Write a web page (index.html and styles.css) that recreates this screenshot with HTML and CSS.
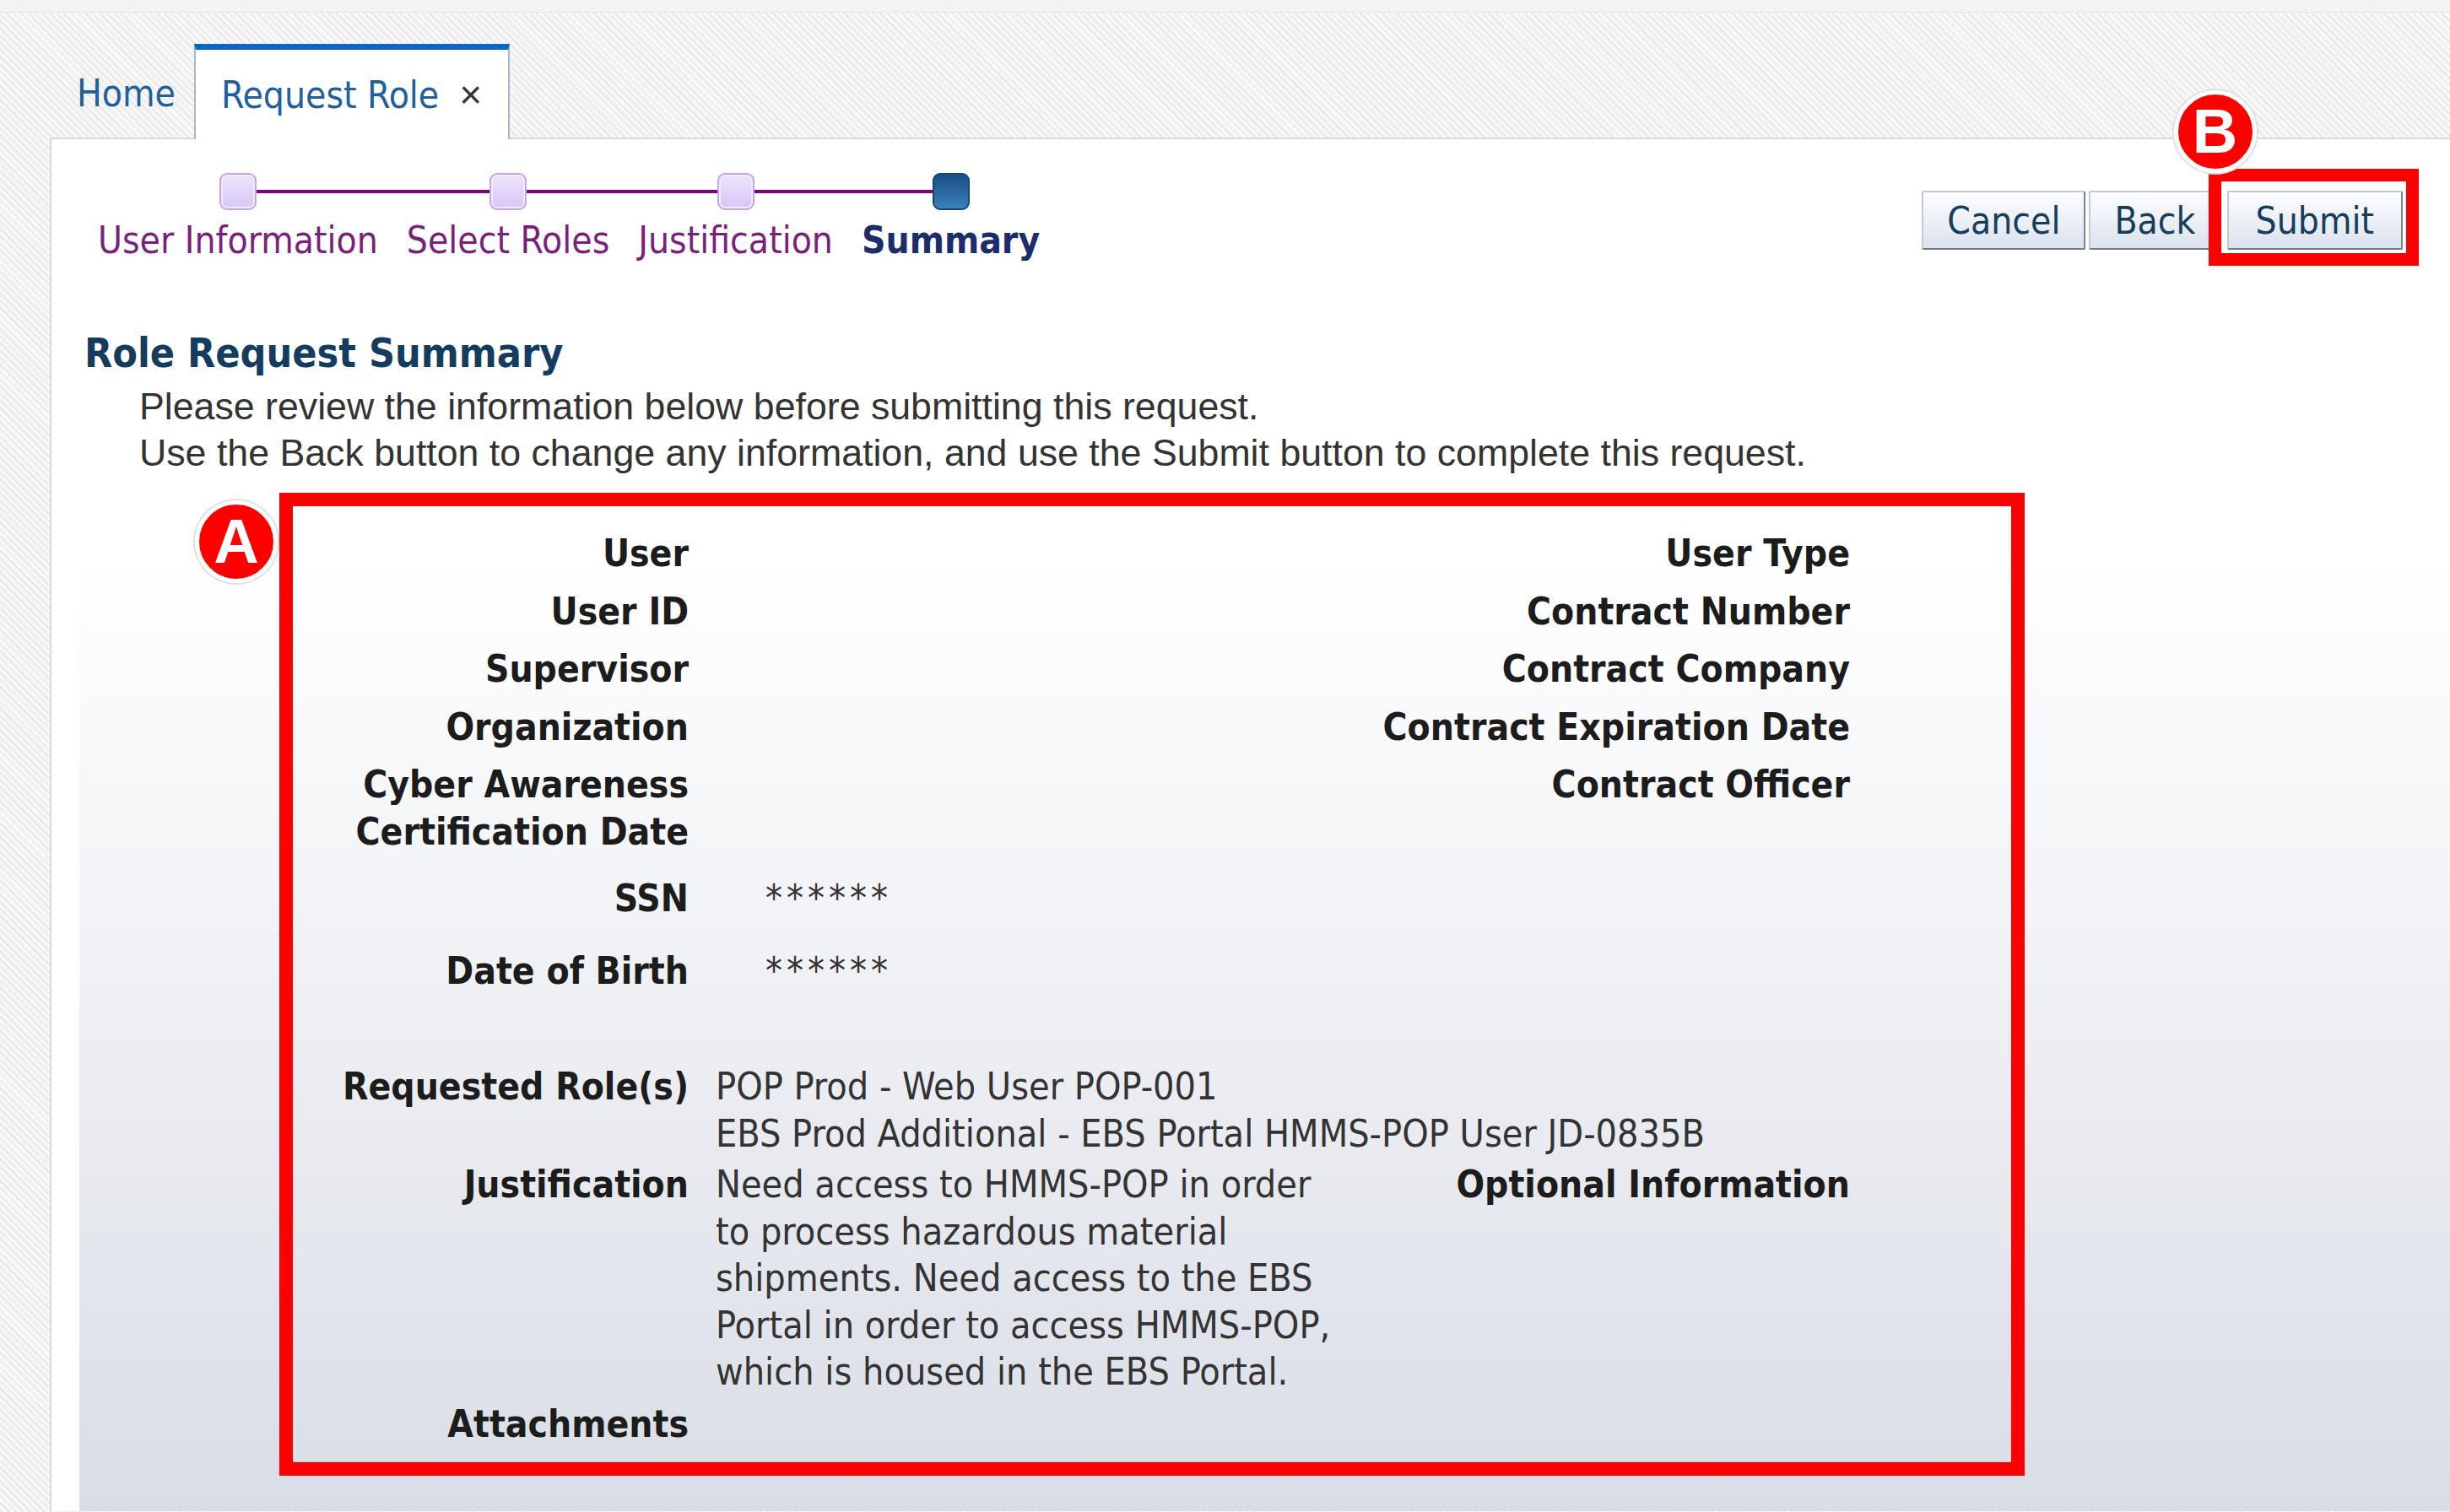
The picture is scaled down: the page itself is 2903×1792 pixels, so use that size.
FILE: index.html
```html
<!DOCTYPE html>
<html>
<head>
    <title>Request Role - Summary</title>
    <link rel="stylesheet" href="styles.css">
</head>
<body>
    <div class="topstrip"></div>

    <!-- Tabs -->
    <div class="tabbar">
        <div class="tab tab-home">Home</div>
        <div class="tab tab-active">Request Role <span class="tab-close">×</span></div>
    </div>

    <div class="panel">
        <div class="inner">
            <div class="topbar">
                <div class="train">
                    <div class="step">
                        <div class="track"><span class="node"></span></div>
                        <div class="step-label">User Information</div>
                    </div>
                    <div class="step">
                        <div class="track"><span class="node"></span></div>
                        <div class="step-label">Select Roles</div>
                    </div>
                    <div class="step">
                        <div class="track"><span class="node"></span></div>
                        <div class="step-label">Justification</div>
                    </div>
                    <div class="step">
                        <div class="track"><span class="node current"></span></div>
                        <div class="step-label current">Summary</div>
                    </div>
                </div>

                <div class="actions">
                    <button class="btn">Cancel</button>
                    <button class="btn">Back</button>
                    <span class="submit-wrap">
                        <button class="btn">Submit</button>
                        <span class="mark"></span>
                        <span class="badge badge-b">B</span>
                    </span>
                </div>
            </div>

            <h1 class="title">Role Request Summary</h1>
            <p class="intro">Please review the information below before submitting this request.<br>
            Use the Back button to change any information, and use the Submit button to complete this request.</p>

            <div class="summary">
                <span class="badge badge-a">A</span>

                <div class="row">
                    <div class="label">User</div><div class="value"></div>
                    <div class="label">User Type</div><div class="value"></div>
                </div>
                <div class="row">
                    <div class="label">User ID</div><div class="value"></div>
                    <div class="label">Contract Number</div><div class="value"></div>
                </div>
                <div class="row">
                    <div class="label">Supervisor</div><div class="value"></div>
                    <div class="label">Contract Company</div><div class="value"></div>
                </div>
                <div class="row">
                    <div class="label">Organization</div><div class="value"></div>
                    <div class="label">Contract Expiration Date</div><div class="value"></div>
                </div>
                <div class="row">
                    <div class="label">Cyber Awareness Certification Date</div><div class="value"></div>
                    <div class="label">Contract Officer</div><div class="value"></div>
                </div>
                <div class="row row-ssn">
                    <div class="label">SSN</div><div class="value masked">******</div>
                </div>
                <div class="row row-dob">
                    <div class="label">Date of Birth</div><div class="value masked">******</div>
                </div>
                <div class="row row-roles">
                    <div class="label">Requested Role(s)</div>
                    <div class="value wide">POP Prod - Web User POP-001<br>EBS Prod Additional - EBS Portal HMMS-POP User JD-0835B</div>
                </div>
                <div class="row row-just">
                    <div class="label">Justification</div>
                    <div class="value">Need access to HMMS-POP in order<br>to process hazardous material<br>shipments. Need access to the EBS<br>Portal in order to access HMMS-POP,<br>which is housed in the EBS Portal.</div>
                    <div class="label">Optional Information</div><div class="value"></div>
                </div>
                <div class="row row-attach">
                    <div class="label">Attachments</div><div class="value"></div>
                </div>
            </div>
        </div>
    </div>
</body>
</html>
```

FILE: styles.css
```css
body {
    margin: 0;
    font-family: "DejaVu Sans Condensed", "DejaVu Sans", sans-serif;
    font-size: 44px;
    color: #222;
    background: repeating-linear-gradient(45deg, #e8e8e8 0, #e8e8e8 2px, #f8f8f8 2px, #f8f8f8 6px);
}
.topstrip {
    height: 14px;
    background: #f3f3f3;
    border-bottom: 1px solid #e4e4e4;
}

/* tabs */
.tabbar {
    display: flex;
    align-items: flex-end;
    height: 148px;
    padding-left: 61px;
}
.tab {
    display: flex;
    align-items: center;
    height: 106px;
    color: #1d5f9f;
}
.tab-home {
    padding: 0 22px 0 30px;
}
.tab-active {
    position: relative;
    margin-bottom: -2px;
    padding: 0 31px 0 30px;
    background: #fff;
    border-top: 7px solid #0b67c6;
    border-left: 2px solid #a9b6c4;
    border-right: 2px solid #a9b6c4;
}
.tab-close {
    margin-left: 24px;
    color: #333;
    font-family: "Liberation Sans", Arial, sans-serif;
    font-size: 46px;
}

/* panel */
.panel {
    margin-left: 59px;
    background: #fff;
    border-left: 2px solid #d3dde8;
    border-top: 2px solid #d3dde8;
}
.inner {
    margin-left: 33px;
    padding: 40px 56px 42px 0;
    background: linear-gradient(to bottom, #fff 0, #fff 30%, #f3f4f7 55%, #d9dde5 100%);
}
.topbar {
    display: flex;
    justify-content: space-between;
    align-items: flex-start;
}

/* train */
.train {
    display: flex;
    margin-left: 5px;
}
.step {
    display: flex;
    flex-direction: column;
    align-items: center;
    padding: 0 17px;
}
.track {
    display: flex;
    align-items: center;
    align-self: stretch;
    height: 44px;
    margin: 0 -17px;
}
.track::before,
.track::after {
    content: "";
    flex: 1;
    height: 4px;
    background: #800080;
}
.step:first-child .track::before,
.step:last-child .track::after {
    visibility: hidden;
}
.node {
    width: 40px;
    height: 40px;
    border: 2px solid #c4a6ee;
    border-radius: 9px;
    background: linear-gradient(#ece5fd, #d6c6f5);
    box-shadow: inset 0 0 0 2px #f1ebff;
}
.node.current {
    border-color: #17466f;
    background: linear-gradient(#1a4f86, #3c7fbd);
    box-shadow: none;
}
.step-label {
    margin-top: 11px;
    line-height: 50px;
    color: #7b1f7d;
}
.step-label.current {
    font-weight: bold;
    color: #1b2d6b;
}

/* buttons */
.actions {
    display: flex;
    align-items: center;
    margin-top: 21px;
}
.btn {
    height: 70px;
    padding: 0 28px;
    margin-left: 4px;
    font-family: inherit;
    font-size: 44px;
    color: #173d5c;
    background: linear-gradient(#fdfdfe, #dbe2ee);
    border: 2px solid #c2c9d3;
    border-right-color: #7a8593;
    border-bottom-color: #6f7a88;
    border-radius: 2px;
}
.submit-wrap {
    position: relative;
    display: flex;
    margin-left: 7px;
}
.submit-wrap .btn {
    margin-left: 0;
    padding: 0 32px;
}
.mark {
    position: absolute;
    left: -22px;
    top: -26px;
    right: -19px;
    bottom: -19px;
    border: 15px solid #f00;
}

/* annotation badges */
.badge {
    position: absolute;
    width: 88px;
    height: 88px;
    border-radius: 50%;
    background: #f00;
    border: 5px solid #fff;
    box-shadow: 0 0 0 2px #e0e0e0;
    color: #fff;
    font-family: "Liberation Sans", Arial, sans-serif;
    font-weight: bold;
    font-size: 74px;
    line-height: 88px;
    text-align: center;
}
.badge-b {
    left: -63px;
    top: -119px;
}
.badge-a {
    left: -116px;
    top: -7px;
}

/* heading */
.title {
    margin: 78px 0 0 6px;
    font-size: 48px;
    line-height: 60px;
    color: #143c5e;
}
.intro {
    margin: 6px 0 0 71px;
    font-family: "Liberation Sans", Arial, sans-serif;
    font-size: 44.7px;
    line-height: 55px;
    color: #333;
}

/* summary box */
.summary {
    position: relative;
    box-sizing: border-box;
    width: 2068px;
    margin: 20px 0 0 237px;
    padding: 28px 0 18px 0;
    border: 16px solid #f00;
}
.row {
    display: grid;
    grid-template-columns: 469px 750px 562px 1fr;
    column-gap: 32px;
    margin-top: 13px;
    line-height: 55.5px;
}
.row:first-of-type {
    margin-top: 0;
}
.row-ssn { margin-top: 24px; }
.row-dob { margin-top: 30px; }
.row-roles { margin-top: 82px; }
.row-just { margin-top: 5px; }
.row-attach { margin-top: 6px; }
.label {
    text-align: right;
    font-weight: bold;
    color: #1c1c1c;
}
.value {
    font-size: 44.5px;
    color: #333;
}
.masked {
    padding-left: 59px;
    letter-spacing: 5px;
}
.wide {
    grid-column: 2 / 5;
}
```
